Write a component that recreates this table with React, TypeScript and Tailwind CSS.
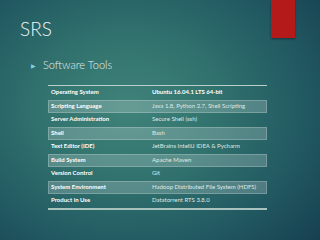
import React from "react";

const rows: [string, string][] = [
  ["Operating System", "Ubuntu 16.04.1 LTS 64-bit"],
  ["Scripting Language", "Java 1.8, Python 2.7, Shell Scripting"],
  ["Server Administration", "Secure Shell (ssh)"],
  ["Shell", "Bash"],
  ["Text Editor (IDE)", "JetBrains IntelliJ IDEA & Pycharm"],
  ["Build System", "Apache Maven"],
  ["Version Control", "Git"],
  ["System Environment", "Hadoop Distributed File System (HDFS)"],
  ["Product in Use", "Datatorrent RTS 3.8.0"],
];

export default function App() {
  return (
    <div
      className="relative w-[320px] h-[240px] overflow-hidden bg-[radial-gradient(ellipse_80%_85%_at_40%_45%,#40837a_0%,#31726e_35%,#225a62_68%,#163f50_100%)] text-white"
      style={{ fontFamily: "Lato, 'Open Sans', sans-serif" }}
    >
      <div className="absolute left-[271px] top-0 w-[24px] h-[38px] bg-[#b51a1b] shadow-[0_1px_2px_rgba(0,0,0,0.4)]" />
      <div className="pl-[20px] pt-[17px] text-[19px] leading-[24px] text-[#f2f5f5] font-light">SRS</div>
      <div className="flex items-center pl-[31px] mt-[17px] h-[14px]">
        <span className="text-[6px] text-[#7fd0e0] mr-[7px]">▶</span>
        <span className="text-[11px] text-[#e4eeee] font-light">Software Tools</span>
      </div>
      <div className="ml-[48px] mt-[13px] w-[219px] border-t border-[#b9cfcb] border-b-2 border-b-[#a8c2be]">
        {rows.map(([a, b], i) => (
          <div
            key={a}
            className={
              "flex items-start pt-[2px] h-[13.55px] text-[6px] leading-[7px] " +
              (i % 2 === 1 ? "bg-[rgba(255,255,255,0.2)] outline outline-1 outline-[rgba(255,255,255,0.22)] -outline-offset-1" : "")
            }
          >
            <div className="w-[101px] pl-[3px] font-bold text-white">{a}</div>
            <div className={"pl-[3px] " + (i === 0 ? "font-bold text-white" : "text-[#dfe9e7]")}>{b}</div>
          </div>
        ))}
      </div>
    </div>
  );
}
